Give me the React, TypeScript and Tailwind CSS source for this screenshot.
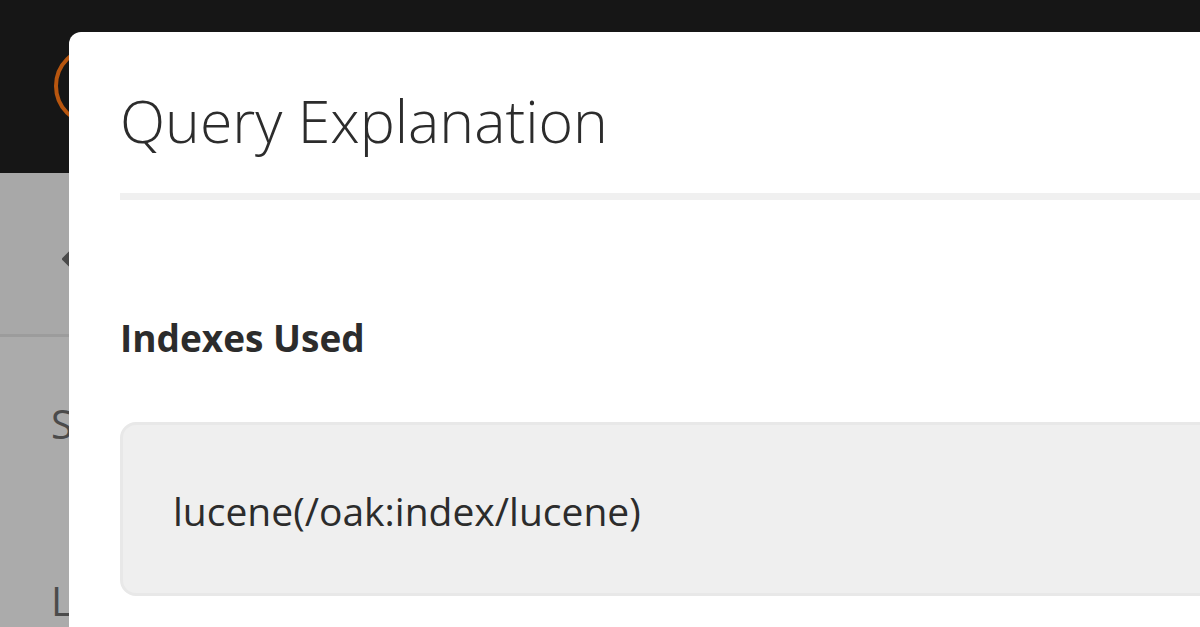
import React from 'react';

const FIELD_LABELS = ['S', 'L'];

const BrandMark: React.FC = () => (
  <svg viewBox="0 0 80 80" className="size-20" fill="none" aria-hidden="true">
    <circle cx="40" cy="39" r="38" stroke="#b8560f" strokeWidth="4" />
  </svg>
);

const BackIcon: React.FC = () => (
  <svg viewBox="0 0 14 20" className="h-5 w-3.5" fill="#4b4b4b" aria-hidden="true">
    <path d="M0.6 8.8 7.6 1.7a1.6 1.6 0 0 1 2.4 0l1.4 1.4L5 10l6.4 6.9-1.4 1.4a1.6 1.6 0 0 1-2.4 0L0.6 11.2a1.6 1.6 0 0 1 0-2.4z" />
    <path d="M3 10 10 3v14z" />
  </svg>
);

const ConsolePage: React.FC = () => (
  <div className="min-h-screen bg-[#ababab]">
    <header className="flex h-[173px] items-center bg-[#161616] px-[54px]">
      <BrandMark />
    </header>
    <nav className="flex h-[164px] items-center border-b-3 border-[#9c9c9c] bg-[#a8a8a8] px-[62px] pt-2.5">
      <button aria-label="Back">
        <BackIcon />
      </button>
    </nav>
    <div className="flex flex-col gap-[129px] px-[51px] pt-[63px] text-[40px] leading-12 text-[#4b4b4b]">
      {FIELD_LABELS.map((label) => (
        <span key={label}>{label}</span>
      ))}
    </div>
  </div>
);

const ExplanationDialog: React.FC = () => (
  <section
    role="dialog"
    aria-labelledby="dialog-title"
    className="absolute top-8 left-[69px] min-h-full w-full rounded-xl bg-white px-[51px] text-[#2c2c2c]"
  >
    <h1
      id="dialog-title"
      className="border-b-7 border-[#f0f0f0] pt-12 pb-[33px] text-[59px] leading-20 font-light whitespace-nowrap"
    >
      Query Explanation
    </h1>
    <h2 className="pt-[110px] text-[37px] leading-14 font-bold">Indexes Used</h2>
    <div className="mt-14 rounded-2xl border-3 border-[#e8e8e8] bg-[#efefef] px-[50px] pt-[58px] pb-[54px] text-[39px] leading-14">
      lucene(/oak:index/lucene)
    </div>
  </section>
);

export default function App() {
  return (
    <main className="relative h-screen overflow-hidden font-['Open_Sans','Noto_Sans',sans-serif]">
      <ConsolePage />
      <ExplanationDialog />
    </main>
  );
}
